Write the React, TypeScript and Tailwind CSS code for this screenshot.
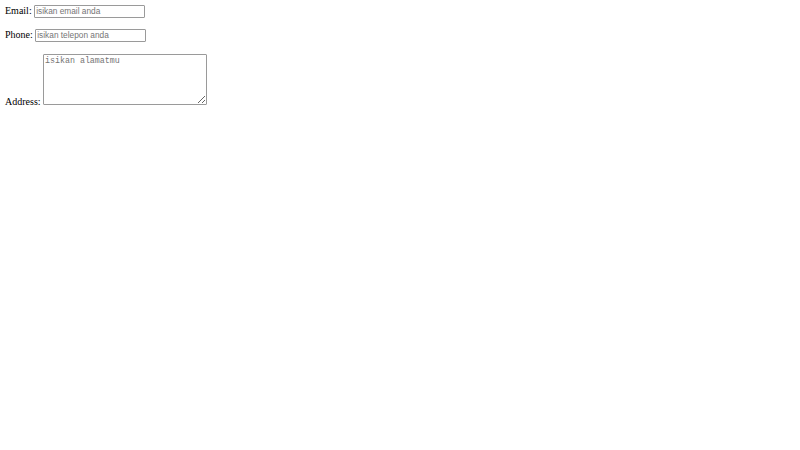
export default function App() {
  return (
    <div className="min-h-[450px] bg-white px-[5px] pt-[3px] font-['Liberation_Serif',serif] text-[10px] leading-normal text-black">
      <div>
        Email:{" "}
        <input
          type="email"
          placeholder="isikan email anda"
          className="h-[13px] w-[111px] rounded-[1px] border border-[#9a9a9a] px-[1px] align-baseline font-['Liberation_Sans',Arial,sans-serif] text-[8.3px] text-black outline-none placeholder:text-[#757575]"
        />
      </div>
      <div className="mt-[9px]">
        Phone:{" "}
        <input
          type="text"
          placeholder="isikan telepon anda"
          className="h-[13px] w-[111px] rounded-[1px] border border-[#9a9a9a] px-[1px] align-baseline font-['Liberation_Sans',Arial,sans-serif] text-[8.3px] text-black outline-none placeholder:text-[#757575]"
        />
      </div>
      <div className="mt-[12px]">
        Address:{" "}
        <textarea
          placeholder="isikan alamatmu"
          className="h-[51px] w-[164px] rounded-[1px] border border-[#9a9a9a] px-[1px] py-[1px] align-baseline font-['Liberation_Mono',monospace] text-[8.3px] leading-[1.15] text-black outline-none placeholder:text-[#757575]"
        />
      </div>
    </div>
  );
}
